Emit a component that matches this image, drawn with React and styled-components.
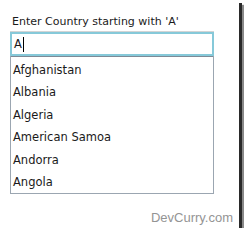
import React from "react";
import styled, { createGlobalStyle } from "styled-components";

const GlobalStyle = createGlobalStyle`
  html, body {
    margin: 0;
    padding: 0;
    background: #ffffff;
  }
`;

const Frame = styled.div`
  width: 239px;
  height: 228px;
  box-sizing: border-box;
  padding: 15px 25px 0 10px;
  display: flex;
  flex-direction: column;
  background: #ffffff;
  box-shadow: 3px 3px 0 #2a2a2a, 5px 5px 1px rgba(40, 40, 40, 0.55);
  font-family: "DejaVu Sans", Verdana, sans-serif;
  color: #1a1a1a;
`;

const Label = styled.div`
  font-size: 11px;
  line-height: 13px;
  margin: 0 0 4px 2px;
  white-space: nowrap;
`;

const SearchBox = styled.div`
  height: 24px;
  box-sizing: border-box;
  border: 2px solid #86c9d9;
  box-shadow: 0 -1px 0 #d4d4d4, 0 1px 0 #7d8a96;
  display: flex;
  align-items: center;
  padding-left: 2px;
  font-size: 11.5px;
`;

const Caret = styled.span`
  display: inline-block;
  width: 1px;
  height: 15px;
  margin-left: 1px;
  background: #000000;
`;

const Suggestions = styled.ul`
  list-style: none;
  margin: 0;
  padding: 3px 0 0;
  border: 1px solid #9ba6b1;
  border-top: none;
`;

const Suggestion = styled.li`
  height: 22.4px;
  line-height: 22.4px;
  padding-left: 2px;
  font-size: 11.5px;
  white-space: nowrap;
`;

const Watermark = styled.div`
  margin-top: auto;
  margin-right: -19px;
  padding-bottom: 3px;
  text-align: right;
  font-family: "Liberation Sans", Arial, sans-serif;
  font-size: 13px;
  line-height: 15px;
  color: #949494;
`;

const countries = [
  "Afghanistan",
  "Albania",
  "Algeria",
  "American Samoa",
  "Andorra",
  "Angola",
];

export default function App() {
  return (
    <>
      <GlobalStyle />
      <Frame>
        <Label>Enter Country starting with 'A'</Label>
        <SearchBox>
          A<Caret />
        </SearchBox>
        <Suggestions>
          {countries.map((c) => (
            <Suggestion key={c}>{c}</Suggestion>
          ))}
        </Suggestions>
        <Watermark>DevCurry.com</Watermark>
      </Frame>
    </>
  );
}
